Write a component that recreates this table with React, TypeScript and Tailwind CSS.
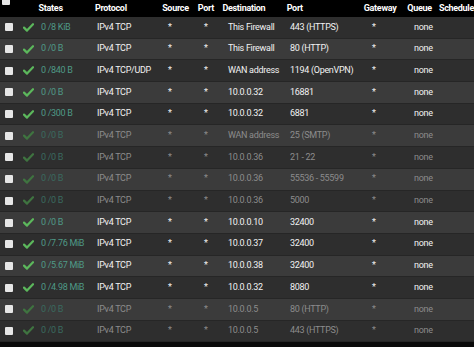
import React from "react";

type Rule = {
  on: boolean;
  states: string;
  proto: string;
  dest: string;
  port: string;
};

const rules: Rule[] = [
  { on: true, states: "0 /8 KiB", proto: "IPv4 TCP", dest: "This Firewall", port: "443 (HTTPS)" },
  { on: true, states: "0 /0 B", proto: "IPv4 TCP", dest: "This Firewall", port: "80 (HTTP)" },
  { on: true, states: "0 /840 B", proto: "IPv4 TCP/UDP", dest: "WAN address", port: "1194 (OpenVPN)" },
  { on: true, states: "0 /0 B", proto: "IPv4 TCP", dest: "10.0.0.32", port: "16881" },
  { on: true, states: "0 /300 B", proto: "IPv4 TCP", dest: "10.0.0.32", port: "6881" },
  { on: false, states: "0 /0 B", proto: "IPv4 TCP", dest: "WAN address", port: "25 (SMTP)" },
  { on: false, states: "0 /0 B", proto: "IPv4 TCP", dest: "10.0.0.36", port: "21 - 22" },
  { on: false, states: "0 /0 B", proto: "IPv4 TCP", dest: "10.0.0.36", port: "55536 - 55599" },
  { on: false, states: "0 /0 B", proto: "IPv4 TCP", dest: "10.0.0.36", port: "5000" },
  { on: true, states: "0 /0 B", proto: "IPv4 TCP", dest: "10.0.0.10", port: "32400" },
  { on: true, states: "0 /7.76 MiB", proto: "IPv4 TCP", dest: "10.0.0.37", port: "32400" },
  { on: true, states: "0 /5.67 MiB", proto: "IPv4 TCP", dest: "10.0.0.38", port: "32400" },
  { on: true, states: "0 /4.98 MiB", proto: "IPv4 TCP", dest: "10.0.0.32", port: "8080" },
  { on: false, states: "0 /0 B", proto: "IPv4 TCP", dest: "10.0.0.5", port: "80 (HTTP)" },
  { on: false, states: "0 /0 B", proto: "IPv4 TCP", dest: "10.0.0.5", port: "443 (HTTPS)" },
];

function Check({ on }: { on: boolean }) {
  return (
    <svg width="11" height="9" viewBox="0 0 11 9" className={on ? "text-[#5cb85c]" : "text-[#3f7440]"}>
      <path d="M1 4.6 L4 7.6 L10 1.2" fill="none" stroke="currentColor" strokeWidth="2.2" strokeLinecap="round" strokeLinejoin="round" />
    </svg>
  );
}

function Box() {
  return <div className="w-[8px] h-[8px] bg-[#e6e6e6] rounded-[1px]" />;
}

export default function App() {
  return (
    <div className="w-[474px] h-[347px] overflow-hidden bg-[#0a0a0a] text-[9px] tracking-[-0.3px] font-['Roboto',sans-serif]">
      <div className="flex h-[17px] items-center bg-black text-white font-bold whitespace-nowrap">
        <div className="w-[38px] pl-[2px] self-start -mt-[3px]">
          <Box />
        </div>
        <div className="w-[57px] pl-[1px]">States</div>
        <div className="w-[68px] pl-[1px]">Protocol</div>
        <div className="w-[36px] pl-[1px]">Source</div>
        <div className="w-[25px] pl-[1px]">Port</div>
        <div className="w-[64px] pl-[1px]">Destination</div>
        <div className="w-[78px] pl-[2px]">Port</div>
        <div className="w-[44px] pl-[2px]">Gateway</div>
        <div className="w-[33px] pl-[2px]">Queue</div>
        <div className="flex-1 pl-[1px]">Schedule</div>
      </div>
      {rules.map((r, i) => (
        <div
          key={i}
          className={`flex h-[21.7px] items-center whitespace-nowrap border-b border-[#262626] ${
            i % 2 === 0 ? "bg-[#2e2e2e]" : "bg-[#3b3b3b]"
          } ${r.on ? "text-[#f2f2f2]" : "text-[#8c8c8c]"}`}
        >
          <div className="w-[20px] pl-[5px]">
            <Box />
          </div>
          <div className="w-[18px] pl-[3px] flex items-center">
            <Check on={r.on} />
          </div>
          <div className={`w-[57px] pl-[3px] ${r.on ? "text-[#4f9a87]" : "text-[#3a6a5f]"}`}>{r.states}</div>
          <div className="w-[68px] pl-[2px]">{r.proto}</div>
          <div className="w-[36px] pl-[5px]">*</div>
          <div className="w-[25px] pl-[5px]">*</div>
          <div className="w-[64px] pl-[4px]">{r.dest}</div>
          <div className="w-[78px] pl-[2px]">{r.port}</div>
          <div className="w-[44px] pl-[6px]">*</div>
          <div className="w-[33px] pl-[4px]">none</div>
          <div className="flex-1" />
        </div>
      ))}
    </div>
  );
}
